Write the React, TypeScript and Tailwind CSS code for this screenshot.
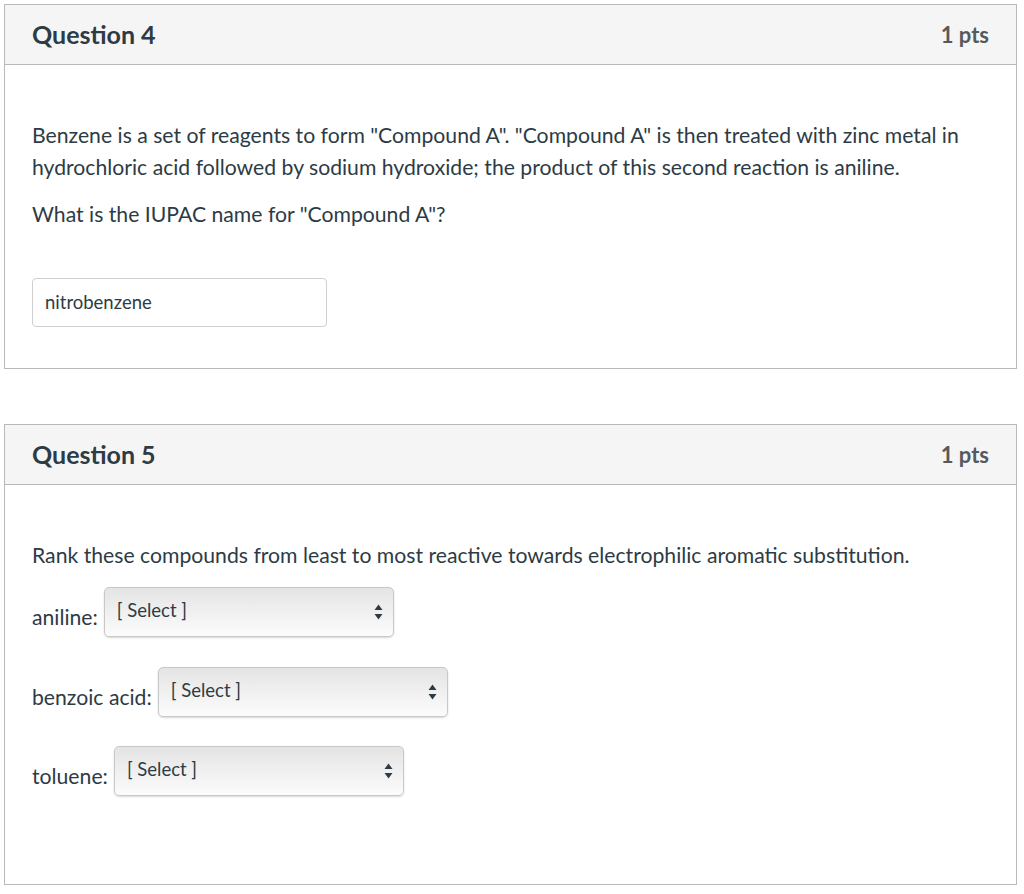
import React from 'react'

const FONT = { fontFamily: 'Lato, "Open Sans", sans-serif' }

function SortArrows() {
  return (
    <svg width="9" height="16" viewBox="0 0 9 16" className="shrink-0">
      <path d="M4.5 0.5 L8.5 6 L0.5 6 Z" fill="#2d3b45" />
      <path d="M4.5 15.5 L8.5 10 L0.5 10 Z" fill="#2d3b45" />
    </svg>
  )
}

function FakeSelect({ width }: { width: string }) {
  return (
    <div
      className={`${width} h-[50px] flex items-center justify-between pl-3 pr-[10px] rounded-[5px] border border-[#c8c8c8] bg-gradient-to-b from-[#e4e4e4] to-[#fcfcfc] shadow-[0_1px_2px_rgba(0,0,0,0.15)]`}
    >
      <span className="text-[18.5px] text-[#2d3b45] -mt-[2px]">[ Select ]</span>
      <SortArrows />
    </div>
  )
}

function QuestionCard({ title, points, children, bodyClass }: { title: string; points: string; children: React.ReactNode; bodyClass: string }) {
  return (
    <div className="w-[1013px] border border-[#b9b9b9] bg-white">
      <div className="h-[60px] flex items-center justify-between pl-[27px] pr-[27px] bg-[#f5f5f5] border-b border-[#b9b9b9]">
        <h2 className="text-[25px] font-bold text-[#2d3b45]">{title}</h2>
        <span className="text-[22px] font-bold text-[#555a5e]">{points}</span>
      </div>
      <div className={`px-[27px] ${bodyClass}`}>{children}</div>
    </div>
  )
}

const ROWS = [
  { label: 'aniline:', width: 'w-[290px]' },
  { label: 'benzoic acid:', width: 'w-[290px]' },
  { label: 'toluene:', width: 'w-[290px]' },
]

export default function App() {
  return (
    <div className="min-h-[894px] bg-white pt-[4px] pl-[4px] text-[#2d3b45]" style={FONT}>
      <QuestionCard title="Question 4" points="1 pts" bodyClass="pt-[54px] pb-[41px]">
        <p className="text-[21.2px] leading-[32px]">
          Benzene is a set of reagents to form "Compound A". "Compound A" is then treated with zinc metal in hydrochloric acid followed by sodium hydroxide; the product of this second reaction is aniline.
        </p>
        <p className="text-[21.2px] leading-[32px] mt-[15px]">What is the IUPAC name for "Compound A"?</p>
        <div className="mt-[48px] w-[295px] h-[49px] flex items-center px-3 border border-[#cfcfcf] rounded-[4px] text-[18.5px]">
          nitrobenzene
        </div>
      </QuestionCard>

      <div className="h-[55px]" />

      <QuestionCard title="Question 5" points="1 pts" bodyClass="pt-[54px] pb-[88px]">
        <p className="text-[21.2px] leading-[32px]">
          Rank these compounds from least to most reactive towards electrophilic aromatic substitution.
        </p>
        <div className="mt-[16px] flex flex-col gap-[29.5px]">
          {ROWS.map(r => (
            <div key={r.label} className="flex items-end gap-[6px]">
              <span className="text-[21.2px] leading-[32px] mb-[4px]">{r.label}</span>
              <FakeSelect width={r.width} />
            </div>
          ))}
        </div>
      </QuestionCard>
    </div>
  )
}
